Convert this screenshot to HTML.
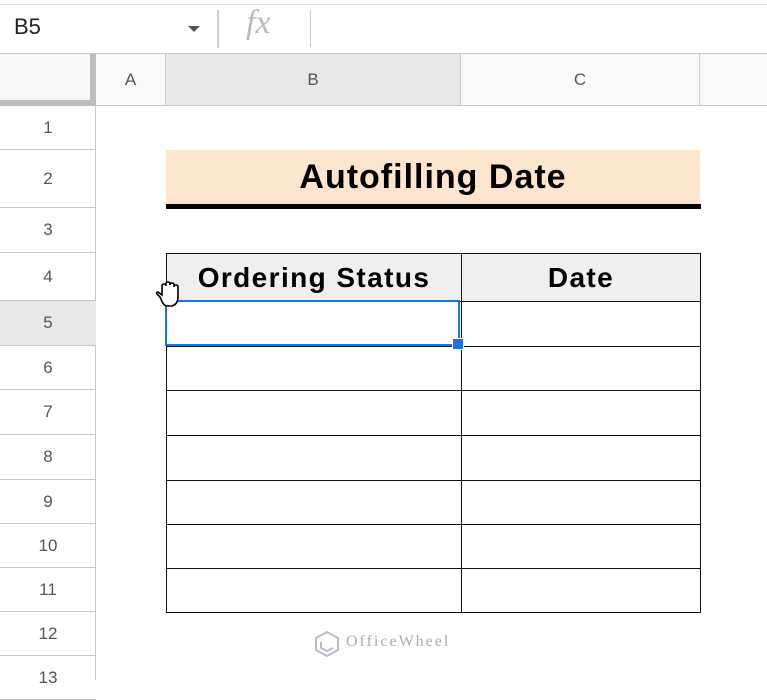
<!DOCTYPE html>
<html><head><style>
*{margin:0;padding:0;box-sizing:border-box}
body{width:767px;height:680px;overflow:hidden;background:#fff;font-family:"Liberation Sans",Arial,sans-serif;position:relative}
.a{position:absolute}
.rh{position:absolute;left:0;width:96px;border-bottom:1px solid #c8c8c8;color:#555;font-size:17px;display:flex;align-items:center;justify-content:center;padding-left:0}
.ch{position:absolute;top:54px;height:52px;border-right:1px solid #c8c8c8;color:#555;font-size:17px;display:flex;align-items:center;justify-content:center}
.cell{position:absolute;border:1px solid #111}
.hd{background:#efefef;display:flex;align-items:center;justify-content:center;font-weight:bold;font-size:28px;letter-spacing:1.4px}
</style></head><body>
<div class="a" style="left:0;top:4px;width:767px;height:1px;background:#ddd"></div>
<div class="a" style="left:14px;top:14px;font-size:22px;color:#222">B5</div>
<div class="a" style="left:188px;top:26px;width:0;height:0;border-left:6px solid transparent;border-right:6px solid transparent;border-top:6px solid #555"></div>
<div class="a" style="left:217px;top:10px;width:2px;height:38px;background:#ccc"></div>
<div class="a" style="left:246px;top:4px;font-family:'Liberation Serif',serif;font-style:italic;font-size:34px;color:#bbb">fx</div>
<div class="a" style="left:310px;top:10px;width:1px;height:37px;background:#ccc"></div>
<div class="a" style="left:0;top:53px;width:767px;height:1px;background:#c8c8c8"></div>
<div class="a" style="left:0;top:54px;width:96px;height:52px;background:#f8f8f8"></div>
<div class="a" style="left:90px;top:54px;width:6px;height:52px;background:#bdbdbd"></div>
<div class="a" style="left:0;top:100px;width:96px;height:6px;background:#bdbdbd"></div>
<div class="ch" style="left:96px;width:70px;background:#f8f9fa">A</div>
<div class="ch" style="left:166px;width:295px;background:#e8e8e8">B</div>
<div class="ch" style="left:461px;width:239px;background:#f8f9fa">C</div>
<div class="ch" style="left:700px;width:67px;background:#f8f9fa;border-right:none"></div>
<div class="a" style="left:96px;top:105px;width:671px;height:1px;background:#c8c8c8"></div>
<div class="a" style="left:95px;top:106px;width:1px;height:574px;background:#c8c8c8"></div>
<div class="rh" style="top:106px;height:44px">1</div>
<div class="rh" style="top:150px;height:58px">2</div>
<div class="rh" style="top:208px;height:45px">3</div>
<div class="rh" style="top:253px;height:48px">4</div>
<div class="rh" style="top:301px;height:45px;background:#e8e8e8">5</div>
<div class="rh" style="top:346px;height:44px">6</div>
<div class="rh" style="top:390px;height:45px">7</div>
<div class="rh" style="top:435px;height:45px">8</div>
<div class="rh" style="top:480px;height:44px">9</div>
<div class="rh" style="top:524px;height:44px">10</div>
<div class="rh" style="top:568px;height:44px">11</div>
<div class="rh" style="top:612px;height:44px">12</div>
<div class="rh" style="top:656px;height:44px">13</div>

<div class="a" style="left:166px;top:150px;width:534px;height:55px;background:#fce5cd;display:flex;align-items:center;justify-content:center;font-weight:bold;font-size:34px;letter-spacing:1px;color:#000">Autofilling Date</div>
<div class="a" style="left:166px;top:204px;width:535px;height:5px;background:#000"></div>

<div class="cell hd" style="left:166px;top:253px;width:296px;height:49px">Ordering Status</div>
<div class="cell hd" style="left:461px;top:253px;width:240px;height:49px">Date</div>
<div class="cell" style="left:166px;top:301px;width:296px;height:46px"></div><div class="cell" style="left:461px;top:301px;width:240px;height:46px"></div>
<div class="cell" style="left:166px;top:346px;width:296px;height:45px"></div><div class="cell" style="left:461px;top:346px;width:240px;height:45px"></div>
<div class="cell" style="left:166px;top:390px;width:296px;height:46px"></div><div class="cell" style="left:461px;top:390px;width:240px;height:46px"></div>
<div class="cell" style="left:166px;top:435px;width:296px;height:46px"></div><div class="cell" style="left:461px;top:435px;width:240px;height:46px"></div>
<div class="cell" style="left:166px;top:480px;width:296px;height:45px"></div><div class="cell" style="left:461px;top:480px;width:240px;height:45px"></div>
<div class="cell" style="left:166px;top:524px;width:296px;height:45px"></div><div class="cell" style="left:461px;top:524px;width:240px;height:45px"></div>
<div class="cell" style="left:166px;top:568px;width:296px;height:45px"></div><div class="cell" style="left:461px;top:568px;width:240px;height:45px"></div>

<div class="a" style="left:165px;top:300px;width:295px;height:46px;border:2px solid #1a73e8"></div>
<div class="a" style="left:452px;top:338px;width:12px;height:12px;background:#1a73e8;border:1px solid #fff"></div>

<svg class="a" style="left:154px;top:280px" width="30" height="30" viewBox="0 0 30 30"><path d="M6 17 L3 14 Q2 12 4 12 L8 15 L8 6 Q8 4 10 4 Q12 4 12 6 L12 4 Q12 2 14 2 Q16 2 16 4 L16 5 Q16 3 18 3 Q20 3 20 5 L20 7 Q20 5 22 5 Q24 5 24 7 L24 17 Q24 24 18 26 L12 26 Q9 25 6 17 Z" fill="#fff" stroke="#000" stroke-width="1.6"/></svg>

<svg class="a" style="left:313px;top:630px" width="28" height="28" viewBox="0 0 28 28"><path d="M14 2 L25 8 L25 20 L14 26 L3 20 L3 8 Z" fill="none" stroke="#b8bcc8" stroke-width="2"/><path d="M8 12 L8 18 L14 21 L20 18" fill="none" stroke="#b8bcc8" stroke-width="2"/></svg>
<div class="a" style="left:346px;top:633px;font-family:'Liberation Serif',serif;font-size:16px;letter-spacing:2px;color:#a8acb8">OfficeWheel</div>
</body></html>
